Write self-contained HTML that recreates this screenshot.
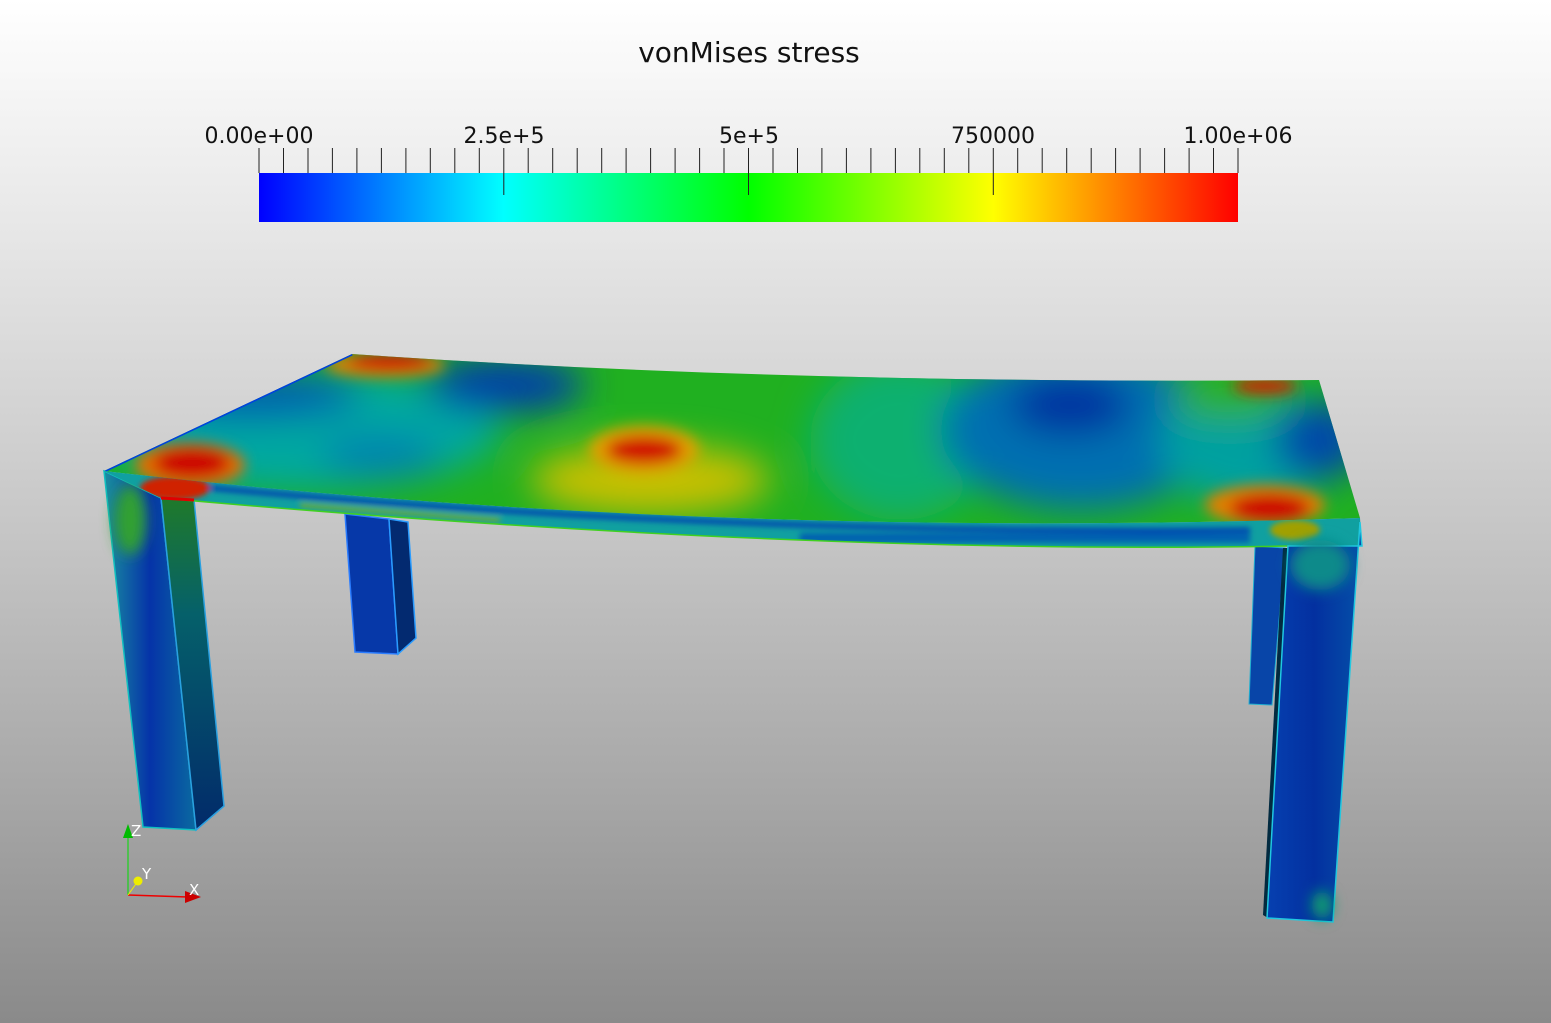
<!DOCTYPE html>
<html><head><meta charset="utf-8"><style>
html,body{margin:0;padding:0;width:1551px;height:1023px;overflow:hidden}
body{background:linear-gradient(#ffffff 0%,#e4e4e4 25%,#c8c8c8 50%,#aaaaaa 75%,#8a8a8a 100%)}
svg{position:absolute;left:0;top:0}
text{font-family:"DejaVu Sans","Liberation Sans",sans-serif}
</style></head><body>
<svg width="1551" height="1023" viewBox="0 0 1551 1023">
<defs>
<linearGradient id="jet" x1="0" x2="1" y1="0" y2="0">
<stop offset="0" stop-color="#0000ff"/><stop offset="0.25" stop-color="#00ffff"/>
<stop offset="0.5" stop-color="#00ff00"/><stop offset="0.75" stop-color="#ffff00"/>
<stop offset="1" stop-color="#ff0000"/></linearGradient>
<filter id="b20" x="-50%" y="-50%" width="200%" height="200%"><feGaussianBlur stdDeviation="18"/></filter>
<filter id="b8" x="-50%" y="-50%" width="200%" height="200%"><feGaussianBlur stdDeviation="7"/></filter>
<filter id="b4" x="-50%" y="-50%" width="200%" height="200%"><feGaussianBlur stdDeviation="3"/></filter>
<clipPath id="top"><path d="M104,471 L352,354 Q800,385 1319,380 L1360,518 Q700,540 104,471 Z"/></clipPath>
<clipPath id="front"><path d="M104,471 Q700,540 1360,518 L1362,546 L1290,546 Q800,555 161,498 Z"/></clipPath>
<linearGradient id="legL" x1="0" x2="1" y1="0" y2="0"><stop offset="0" stop-color="#1a8fa0"/><stop offset="0.5" stop-color="#0533a8"/><stop offset="1" stop-color="#0a6aa0"/></linearGradient>
<linearGradient id="legLs" x1="0" x2="0" y1="0" y2="1"><stop offset="0" stop-color="#1f7a2a"/><stop offset="0.35" stop-color="#05606a"/><stop offset="1" stop-color="#022a6a"/></linearGradient>
<linearGradient id="legR" x1="0" x2="1" y1="0" y2="0"><stop offset="0" stop-color="#0640b0"/><stop offset="0.5" stop-color="#0330a0"/><stop offset="1" stop-color="#0550a8"/></linearGradient>
</defs>

<text x="749" y="62" font-size="28" text-anchor="middle" fill="#111">vonMises stress</text>
<g font-size="22" fill="#111" text-anchor="middle">
<text x="259" y="143">0.00e+00</text><text x="504" y="143">2.5e+5</text>
<text x="749" y="143">5e+5</text><text x="993" y="143">750000</text><text x="1238" y="143">1.00e+06</text></g>
<rect x="259" y="173" width="979" height="49" fill="url(#jet)"/>
<path stroke="#222" stroke-width="1" fill="none" d="M259,148V173M283.5,148V173M308,148V173M332.4,148V173M356.9,148V173M381.4,148V173M405.9,148V173M430.3,148V173M454.8,148V173M479.3,148V173M528.2,148V173M552.7,148V173M577.2,148V173M601.7,148V173M626.1,148V173M650.6,148V173M675.1,148V173M699.6,148V173M724,148V173M773,148V173M797.5,148V173M821.9,148V173M846.4,148V173M870.9,148V173M895.4,148V173M919.8,148V173M944.3,148V173M968.8,148V173M1017.7,148V173M1042.2,148V173M1066.7,148V173M1091.2,148V173M1115.6,148V173M1140.1,148V173M1164.6,148V173M1189.1,148V173M1213.5,148V173M1238,148V173M503.8,148V195M748.5,148V195M993.3,148V195"/>

<!-- back legs -->
<path d="M345,514 L355,652 L398,654 L389,519 Z" fill="#0638a8" stroke="#2a7cff" stroke-width="1.5"/>
<path d="M389,519 L398,654 L416,638 L408,522 Z" fill="#032a70" stroke="#2a9cff" stroke-width="1.5"/>
<path d="M1255,546 L1249,704 L1272,705 L1285,548 Z" fill="#0845a8" stroke="#20b0d0" stroke-width="1"/>

<!-- front-left leg -->
<path d="M104,471 L143,827 L196,830 L161,498 Z" fill="url(#legL)" stroke="#10c0c0" stroke-width="1.5"/>
<g filter="url(#b8)"><ellipse cx="130" cy="520" rx="16" ry="35" fill="#30a030"/></g>
<path d="M161,498 L196,830 L224,806 L194,500 Z" fill="url(#legLs)" stroke="#2aa0e0" stroke-width="1.5"/>

<!-- tabletop top surface -->
<g clip-path="url(#top)">
<rect x="100" y="350" width="1270" height="190" fill="#20b020"/>
<g filter="url(#b20)">
<ellipse cx="300" cy="430" rx="200" ry="60" fill="#00a8a0"/>
<ellipse cx="250" cy="395" rx="110" ry="25" fill="#0060b0"/>
<ellipse cx="505" cy="385" rx="80" ry="28" fill="#0040a8"/>
<ellipse cx="380" cy="455" rx="60" ry="20" fill="#0080b0"/>
<ellipse cx="900" cy="440" rx="90" ry="80" fill="#10b070"/>
<ellipse cx="1080" cy="430" rx="140" ry="80" fill="#0070b0"/>
<ellipse cx="1070" cy="405" rx="60" ry="30" fill="#0030a0"/>
<ellipse cx="1250" cy="445" rx="90" ry="60" fill="#00a0a0"/>
<ellipse cx="1320" cy="440" rx="45" ry="40" fill="#0048a8"/>
<ellipse cx="650" cy="480" rx="120" ry="35" fill="#c8c000"/>
<ellipse cx="1230" cy="400" rx="60" ry="18" fill="#30b020"/>
</g>
<g filter="url(#b8)">
<ellipse cx="644" cy="450" rx="55" ry="24" fill="#e0a000"/>
<ellipse cx="644" cy="450" rx="38" ry="14" fill="#d01000"/>
<ellipse cx="385" cy="365" rx="60" ry="12" fill="#e08000"/>
<ellipse cx="390" cy="362" rx="42" ry="8" fill="#d00000"/>
<ellipse cx="190" cy="465" rx="55" ry="22" fill="#e07000"/>
<ellipse cx="192" cy="463" rx="38" ry="15" fill="#cc0000"/>
<ellipse cx="1265" cy="505" rx="60" ry="20" fill="#e08000"/>
<ellipse cx="1270" cy="508" rx="40" ry="14" fill="#cc0000"/>
<ellipse cx="1265" cy="386" rx="32" ry="8" fill="#d02000"/>
</g>
<path d="M104,471 L352,354" stroke="#0040e0" stroke-width="3"/>
</g>
<!-- tabletop front face -->
<g clip-path="url(#front)">
<rect x="100" y="465" width="1270" height="90" fill="#10a0a0"/>
<g filter="url(#b4)">
<path d="M190,486 Q700,535 1250,530" stroke="#0040b0" stroke-width="5" fill="none"/>
<path d="M800,538 L1250,538" stroke="#0060b0" stroke-width="10" fill="none"/>
<path d="M300,505 L500,520" stroke="#a0b000" stroke-width="3" fill="none"/>
<ellipse cx="175" cy="488" rx="35" ry="12" fill="#d02000"/>
<ellipse cx="1295" cy="530" rx="25" ry="10" fill="#a0a000"/>
</g>
</g>
<path d="M161,498 Q800,555 1290,546" stroke="#40d020" stroke-width="1.5" fill="none"/>
<path d="M161,498 L194,500" stroke="#e00000" stroke-width="3"/>

<!-- front-right leg -->
<path d="M1283,548 L1263,915 L1268,918 L1288,548 Z" fill="#022a40"/>
<path d="M1288,546 L1267,918 L1333,922 L1360,522 L1362,546 Z" fill="url(#legR)" stroke="#20c8e0" stroke-width="1.5"/>
<g filter="url(#b8)"><ellipse cx="1320" cy="565" rx="30" ry="25" fill="#108a8a"/><ellipse cx="1322" cy="905" rx="10" ry="14" fill="#10a070"/></g>

<!-- axes triad -->
<line x1="128" y1="895" x2="128" y2="832" stroke="#00dd00" stroke-width="1"/>
<path d="M123,838 L128,824 L133,838 Z" fill="#00bb00"/>
<line x1="128" y1="895" x2="188" y2="897" stroke="#ee0000" stroke-width="1.5"/>
<path d="M185,891 L201,897 L185,903 Z" fill="#cc0000"/>
<line x1="128" y1="895" x2="138" y2="881" stroke="#eeee00" stroke-width="1"/>
<circle cx="138" cy="881" r="4.5" fill="#eeee00"/>
<g fill="#fff" font-size="15"><text x="131" y="836">Z</text><text x="142" y="879">Y</text><text x="189" y="895">X</text></g>
</svg>
</body></html>
